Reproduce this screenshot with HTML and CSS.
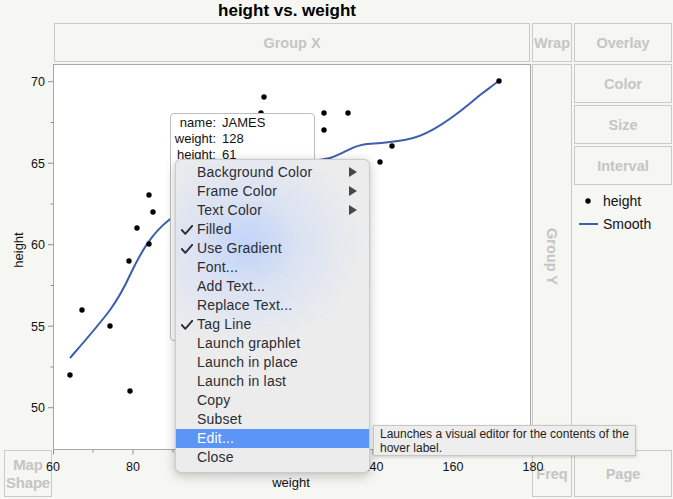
FILE: index.html
```html
<!DOCTYPE html>
<html>
<head>
<meta charset="utf-8">
<title>height vs. weight</title>
<link rel="stylesheet" href="styles.css">
</head>
<body>
<div class="app">
  <div class="title">height vs. weight</div>
  <div class="zone zone-gx">Group X</div>
  <div class="zone zone-wrap">Wrap</div>
  <div class="zone zone-overlay">Overlay</div>

  <div class="yaxis">
    <svg width="53" height="386" viewBox="0 0 53 386">
      <g class="ticks">
        <line x1="48" y1="17.7" x2="53" y2="17.7"/>
        <line x1="48" y1="99.2" x2="53" y2="99.2"/>
        <line x1="48" y1="180.7" x2="53" y2="180.7"/>
        <line x1="48" y1="262.2" x2="53" y2="262.2"/>
        <line x1="48" y1="343.7" x2="53" y2="343.7"/>
        <line x1="50.5" y1="58.5" x2="53" y2="58.5"/>
        <line x1="50.5" y1="140" x2="53" y2="140"/>
        <line x1="50.5" y1="221.5" x2="53" y2="221.5"/>
        <line x1="50.5" y1="303" x2="53" y2="303"/>
      </g>
      <g class="ticklabels" text-anchor="end">
        <text x="45" y="22.2">70</text>
        <text x="45" y="103.7">65</text>
        <text x="45" y="185.2">60</text>
        <text x="45" y="266.7">55</text>
        <text x="45" y="348.2">50</text>
      </g>
      <text class="axtitle" x="0" y="0" text-anchor="middle" transform="translate(23 186) rotate(-90)">height</text>
    </svg>
  </div>

  <div class="plot">
    <svg width="478" height="386" viewBox="0 0 478 386">
      <rect x="0.5" y="0.5" width="477" height="385" fill="#ffffff" stroke="#a8a8a8"/>
      <path d="M17,294 C30,279 45,262 57,246 C67,232 72,222 77,211 C87,190 98,170 116,156 C160,122 240,100 277,94 C292,89 300,81 314,80 C330,79 345,78 360,74 C380,69 405,50 427,31 C434,26 440,21 446,17" fill="none" stroke="#3d5ead" stroke-width="2"/>
      <g fill="#000">
        <circle cx="17" cy="311" r="2.7"/>
        <circle cx="29" cy="246" r="2.7"/>
        <circle cx="57" cy="262" r="2.7"/>
        <circle cx="76" cy="197" r="2.7"/>
        <circle cx="77" cy="327" r="2.7"/>
        <circle cx="84" cy="164" r="2.7"/>
        <circle cx="96" cy="131" r="2.7"/>
        <circle cx="100" cy="148" r="2.7"/>
        <circle cx="96" cy="180" r="2.7"/>
        <circle cx="211" cy="33" r="2.7"/>
        <circle cx="208" cy="49" r="2.7"/>
        <circle cx="271" cy="49" r="2.7"/>
        <circle cx="295" cy="49" r="2.7"/>
        <circle cx="271" cy="66" r="2.7"/>
        <circle cx="339" cy="82" r="2.7"/>
        <circle cx="327" cy="98" r="2.7"/>
        <circle cx="446" cy="17" r="2.7"/>
      </g>
    </svg>
  </div>

  <div class="zone zone-gy"><span class="vtext">Group Y</span></div>

  <div class="side">
    <div class="zone zone-side">Color</div>
    <div class="zone zone-side">Size</div>
    <div class="zone zone-side">Interval</div>
    <div class="legend">
      <div class="legend-row">
        <span class="marker"><svg width="20" height="10" viewBox="0 0 20 10"><circle cx="9" cy="5" r="2.7" fill="#000"/></svg></span>
        <span>height</span>
      </div>
      <div class="legend-row">
        <span class="marker"><svg width="20" height="10" viewBox="0 0 20 10"><line x1="0" y1="5" x2="19" y2="5" stroke="#3d5ead" stroke-width="2"/></svg></span>
        <span>Smooth</span>
      </div>
    </div>
  </div>

  <div class="zone zone-map">Map<br>Shape</div>

  <div class="xaxis">
    <svg width="478" height="49" viewBox="0 0 478 49">
      <g class="ticks">
        <line x1="0.5" y1="0" x2="0.5" y2="4.5"/>
        <line x1="80" y1="0" x2="80" y2="4.5"/>
        <line x1="160" y1="0" x2="160" y2="4.5"/>
        <line x1="240" y1="0" x2="240" y2="4.5"/>
        <line x1="320" y1="0" x2="320" y2="4.5"/>
        <line x1="400" y1="0" x2="400" y2="4.5"/>
        <line x1="477.5" y1="0" x2="477.5" y2="4.5"/>
        <line x1="40" y1="0" x2="40" y2="2.5"/>
        <line x1="120" y1="0" x2="120" y2="2.5"/>
        <line x1="200" y1="0" x2="200" y2="2.5"/>
        <line x1="280" y1="0" x2="280" y2="2.5"/>
        <line x1="360" y1="0" x2="360" y2="2.5"/>
        <line x1="440" y1="0" x2="440" y2="2.5"/>
      </g>
      <g class="ticklabels" text-anchor="middle">
        <text x="0" y="20.5">60</text>
        <text x="80" y="20.5">80</text>
        <text x="160" y="20.5">100</text>
        <text x="240" y="20.5">120</text>
        <text x="320" y="20.5">140</text>
        <text x="400" y="20.5">160</text>
        <text x="480" y="20.5">180</text>
      </g>
      <text class="axtitle" x="238" y="36.5" text-anchor="middle">weight</text>
    </svg>
  </div>

  <div class="zone zone-freq">Freq</div>
  <div class="zone zone-page">Page</div>
</div>

<div class="hover-label">
  <div class="hl-grid">
    <span class="hl-key">name:</span><span>JAMES</span>
    <span class="hl-key">weight:</span><span>128</span>
    <span class="hl-key">height:</span><span>61</span>
  </div>
</div>

<div class="menu">
  <div class="mi">Background Color<span class="arrow"><svg width="8" height="10" viewBox="0 0 8 10"><polygon points="0,0 8,5 0,10" fill="#474747"/></svg></span></div>
  <div class="mi">Frame Color<span class="arrow"><svg width="8" height="10" viewBox="0 0 8 10"><polygon points="0,0 8,5 0,10" fill="#474747"/></svg></span></div>
  <div class="mi">Text Color<span class="arrow"><svg width="8" height="10" viewBox="0 0 8 10"><polygon points="0,0 8,5 0,10" fill="#474747"/></svg></span></div>
  <div class="mi"><span class="check"><svg width="12" height="10" viewBox="0 0 12 10"><polyline points="0.8,5 4.3,8.8 11.2,0.8" fill="none" stroke="#2b2e36" stroke-width="1.9" stroke-linejoin="round" stroke-linecap="round"/></svg></span>Filled</div>
  <div class="mi"><span class="check"><svg width="12" height="10" viewBox="0 0 12 10"><polyline points="0.8,5 4.3,8.8 11.2,0.8" fill="none" stroke="#2b2e36" stroke-width="1.9" stroke-linejoin="round" stroke-linecap="round"/></svg></span>Use Gradient</div>
  <div class="mi">Font...</div>
  <div class="mi">Add Text...</div>
  <div class="mi">Replace Text...</div>
  <div class="mi"><span class="check"><svg width="12" height="10" viewBox="0 0 12 10"><polyline points="0.8,5 4.3,8.8 11.2,0.8" fill="none" stroke="#2b2e36" stroke-width="1.9" stroke-linejoin="round" stroke-linecap="round"/></svg></span>Tag Line</div>
  <div class="mi">Launch graphlet</div>
  <div class="mi">Launch in place</div>
  <div class="mi">Launch in last</div>
  <div class="mi">Copy</div>
  <div class="mi">Subset</div>
  <div class="mi mi-active">Edit...</div>
  <div class="mi">Close</div>
</div>

<div class="tooltip">Launches a visual editor for the contents of the<br>hover label.</div>
</body>
</html>
```

FILE: styles.css
```css
* { box-sizing: border-box; }

html, body {
  margin: 0;
  padding: 0;
}

body {
  width: 673px;
  height: 499px;
  overflow: hidden;
  position: relative;
  background: #f6f6f2;
  font-family: "Liberation Sans", Arial, sans-serif;
  color: #111;
}

.app {
  display: grid;
  grid-template-columns: 53px 478px 41px 101px;
  grid-template-rows: 23px 41px 386px 49px;
}

.title {
  grid-column: 1 / 4;
  grid-row: 1;
  text-align: center;
  font-weight: bold;
  font-size: 17px;
  line-height: 21px;
  color: #000;
  padding-left: 2px;
}

.zone {
  border: 1px solid #cacaca;
  display: flex;
  align-items: center;
  justify-content: center;
  font-weight: bold;
  font-size: 14.5px;
  color: #c5c5c5;
  text-align: center;
}

.zone-gx {
  grid-column: 2;
  grid-row: 2;
  margin-left: 1px;
  width: 476px;
  height: 39px;
}

.zone-wrap {
  grid-column: 3;
  grid-row: 2;
  margin-left: 1px;
  width: 40px;
  height: 39px;
}

.zone-overlay {
  grid-column: 4;
  grid-row: 2;
  margin-left: 2px;
  width: 98px;
  height: 39px;
}

.yaxis {
  grid-column: 1;
  grid-row: 3;
}

.yaxis svg, .xaxis svg, .plot svg {
  display: block;
  overflow: visible;
}

.ticks line {
  stroke: #8c8c8c;
  stroke-width: 1;
}

.ticklabels text {
  font-family: "Liberation Sans", Arial, sans-serif;
  font-size: 12.5px;
  fill: #111;
}

.axtitle {
  font-family: "Liberation Sans", Arial, sans-serif;
  font-size: 13px;
  fill: #111;
}

.plot {
  grid-column: 2;
  grid-row: 3;
}

.zone-gy {
  grid-column: 3;
  grid-row: 3;
  margin-left: 1px;
  width: 40px;
  height: 385px;
}

.vtext {
  writing-mode: vertical-rl;
}

.side {
  grid-column: 4;
  grid-row: 3;
  margin-left: 2px;
  display: flex;
  flex-direction: column;
  gap: 2px;
}

.zone-side {
  width: 98px;
  height: 39px;
}

.legend {
  margin-top: 2px;
  padding-left: 5px;
  font-size: 14px;
  color: #111;
}

.legend-row {
  display: flex;
  align-items: center;
  height: 23px;
  gap: 4px;
}

.marker svg {
  display: block;
}

.zone-map {
  grid-column: 1;
  grid-row: 4;
  margin-left: 4px;
  width: 48px;
  height: 47px;
  line-height: 18px;
  font-size: 15px;
  letter-spacing: -0.2px;
  white-space: nowrap;
}

.xaxis {
  grid-column: 2;
  grid-row: 4;
  position: relative;
  z-index: 2;
}

.zone-freq {
  grid-column: 3;
  grid-row: 4;
  margin-left: 1px;
  width: 40px;
  height: 47px;
}

.zone-page {
  grid-column: 4;
  grid-row: 4;
  margin-left: 2px;
  width: 98px;
  height: 47px;
}

/* overlays */
.hover-label {
  position: absolute;
  left: 170px;
  top: 113px;
  width: 145px;
  height: 228px;
  background: #fff;
  border: 1px solid #bdbdbd;
  border-radius: 4px;
  padding-top: 1px;
  z-index: 5;
}

.hl-grid {
  display: grid;
  grid-template-columns: 45px auto;
  column-gap: 6px;
  font-size: 13px;
  line-height: 16px;
  color: #111;
}

.hl-key {
  text-align: right;
}

.menu {
  position: absolute;
  left: 175px;
  top: 159px;
  width: 195px;
  height: 314px;
  padding: 3px 0 5px;
  border: 1px solid rgba(0, 0, 0, 0.13);
  border-radius: 6px;
  background:
    radial-gradient(ellipse 115px 105px at 72px 84px, rgba(190, 210, 250, 0.95) 0%, rgba(208, 220, 246, 0.6) 45%, rgba(236, 237, 240, 0) 100%),
    #ececec;
  box-shadow: 0 3px 12px rgba(0, 0, 0, 0.22), 0 0 2px rgba(0, 0, 0, 0.1);
  z-index: 6;
}

.mi {
  position: relative;
  height: 19px;
  line-height: 19px;
  padding-left: 21px;
  font-size: 14px;
  letter-spacing: 0.2px;
  color: #2a2c33;
  white-space: nowrap;
}

.mi-active {
  background: #5b95f6;
  color: #fff;
}

.check {
  position: absolute;
  left: 5px;
  top: 5px;
  line-height: 0;
}

.arrow {
  position: absolute;
  right: 12px;
  top: 4px;
  line-height: 0;
}

.tooltip {
  position: absolute;
  left: 373px;
  top: 425px;
  width: 263px;
  height: 31px;
  padding: 1px 6px;
  background: #ededed;
  border: 1px solid #c6c6c6;
  box-shadow: 0 1px 3px rgba(0, 0, 0, 0.18);
  font-size: 12px;
  line-height: 14px;
  color: #1e1e1e;
  white-space: nowrap;
  z-index: 7;
}
```
